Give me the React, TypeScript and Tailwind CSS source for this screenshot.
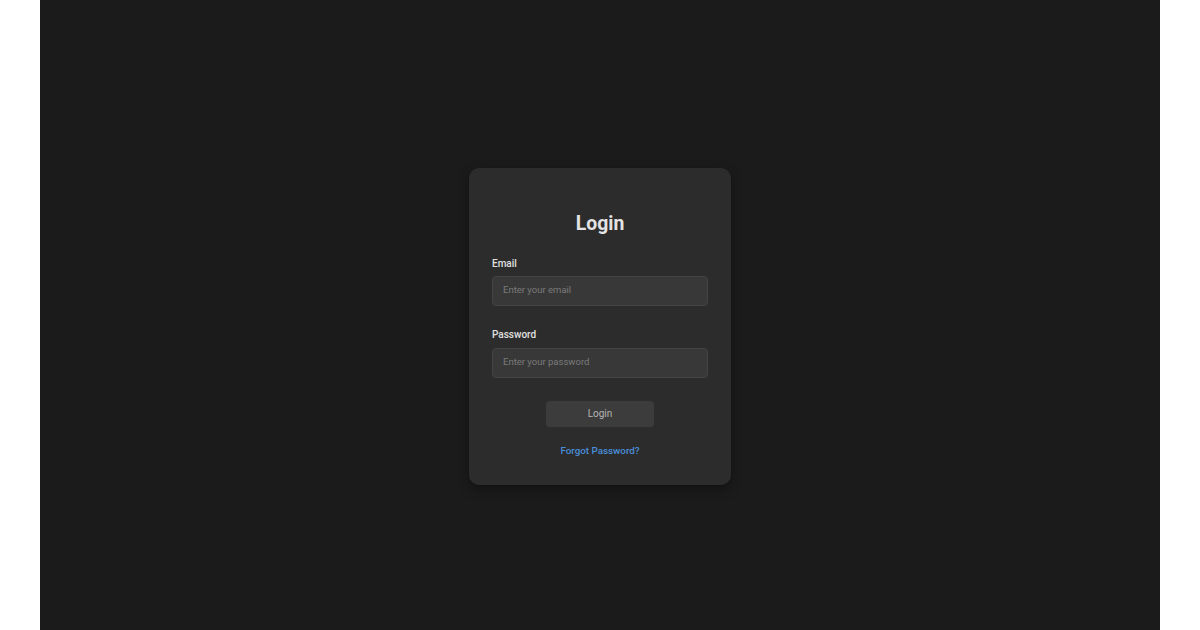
import React from "react";

export default function App() {
  return (
    <div className="w-full h-[630px] bg-white flex justify-center" style={{ fontFamily: "Roboto, 'Liberation Sans', sans-serif" }}>
      <div className="w-[1120px] h-full bg-[#1b1b1b] flex items-center justify-center pt-[22px]">
        <div className="w-[262px] h-[317px] bg-[#2c2c2c] rounded-[10px] shadow-[0_4px_12px_rgba(0,0,0,0.35)] px-[23px] pt-[43px] flex flex-col">
          <h1 className="text-center text-[19.4px] leading-[26px] font-bold text-[#e3e3e3]">Login</h1>
          <label className="mt-[20px] text-[10px] leading-[14px] font-medium text-[#e0e0e0]">Email</label>
          <div className="mt-[5px] h-[30px] rounded-[4px] bg-[#383838] border border-[#444] flex items-center px-[10px] text-[9.5px] text-[#7a7a7a]">Enter your email</div>
          <label className="mt-[22px] text-[10px] leading-[14px] font-medium text-[#e0e0e0]">Password</label>
          <div className="mt-[6px] h-[30px] rounded-[4px] bg-[#383838] border border-[#444] flex items-center px-[10px] text-[9.5px] text-[#7a7a7a]">Enter your password</div>
          <button className="mt-[23px] self-center w-[108px] h-[26px] rounded-[4px] bg-[#3c3c3c] text-[10px] text-[#b5b5b5]">Login</button>
          <a className="mt-[18px] self-center text-[9.8px] font-medium text-[#4a8fdb] leading-[12px]">Forgot Password?</a>
        </div>
      </div>
    </div>
  );
}
